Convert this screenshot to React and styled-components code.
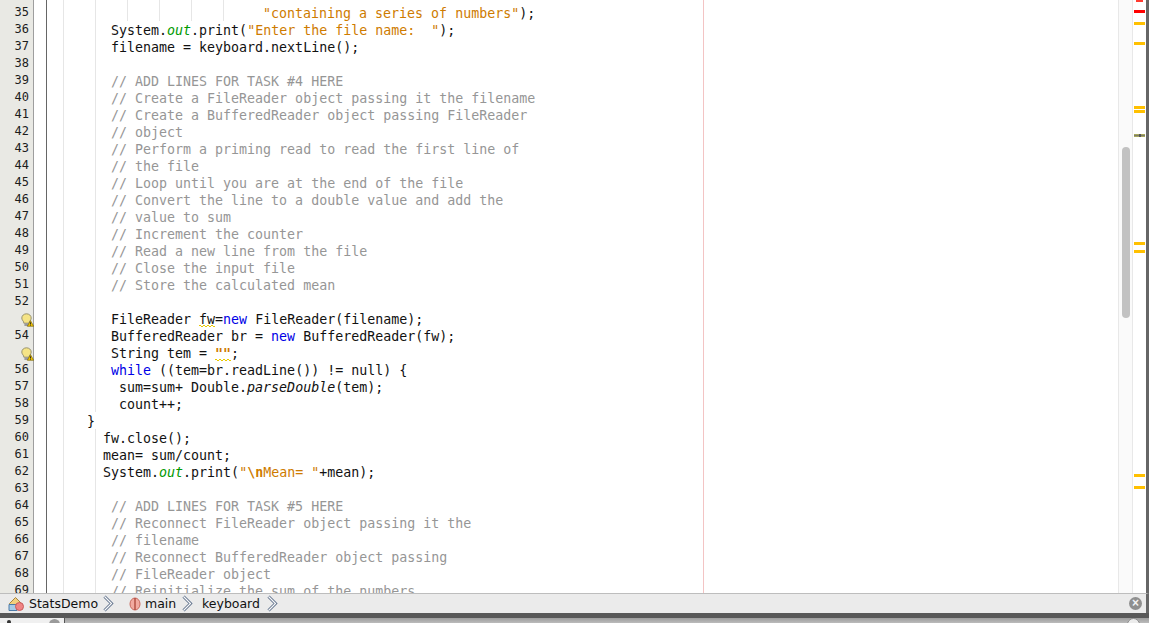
import React from "react";
import styled, { createGlobalStyle } from "styled-components";

const GlobalStyle = createGlobalStyle`
  html, body {
    margin: 0;
    padding: 0;
    background: #fff;
    overflow: hidden;
  }
`;

const STEP = 32;
const MONO = `"DejaVu Sans Mono", "Liberation Mono", monospace`;

const guideImage = ({ $guides }) =>
  Array.from({ length: $guides }, () => "linear-gradient(#e6e6e6, #e6e6e6)").join(", ") || "none";

const guidePos = ({ $guides }) =>
  Array.from({ length: $guides }, (_, i) => `${16 + i * STEP}px 0`).join(", ") || "0 0";

const Window = styled.div`
  width: 1149px;
  height: 623px;
  display: flex;
  flex-direction: column;
  overflow: hidden;
  background: #fff;
`;

const EditorRow = styled.div`
  height: 593px;
  display: flex;
  overflow: hidden;
`;

const Gutter = styled.div`
  width: 33px;
  flex: none;
  margin-top: -13px;
  background: #e9e9e4;
  border-right: 1px solid #9e9e9e;
  height: 606px;
`;

const GutterCell = styled.div`
  height: 17px;
  padding-right: 4px;
  text-align: right;
  font: 12px/17px ${MONO};
  color: #1c1c1c;
  position: relative;
`;

const Hint = styled.svg`
  position: absolute;
  right: -1px;
  top: 3px;
  width: 13px;
  height: 14px;
`;

const FoldStrip = styled.div`
  width: 12px;
  flex: none;
`;

const CodeArea = styled.div`
  width: 1072px;
  flex: none;
  margin-top: -13px;
  height: 606px;
  border-left: 1px solid #666;
  box-sizing: border-box;
  background-image: linear-gradient(#f3c4c4, #f3c4c4);
  background-repeat: no-repeat;
  background-size: 1px 100%;
  background-position: 656px 0;
`;

const CodeLine = styled.div`
  height: 17px;
  white-space: pre;
  font: 13.3px/19px ${MONO};
  color: #111;
  padding-left: ${({ $x }) => $x}px;
  background-image: ${guideImage};
  background-repeat: no-repeat;
  background-size: 1px 100%;
  background-position: ${guidePos};
`;

const Comment = styled.span`
  color: #969696;
`;

const Str = styled.span`
  color: #ce7b00;
  font-weight: ${({ $bold }) => ($bold ? "bold" : "normal")};
`;

const Keyword = styled.span`
  color: #0000e6;
`;

const Field = styled.span`
  color: #009900;
  font-style: italic;
`;

const Method = styled.span`
  font-style: italic;
`;

const Squiggle = styled.span`
  background-image:
    repeating-linear-gradient(90deg, #e8c800 0 2px, transparent 2px 4px),
    repeating-linear-gradient(90deg, transparent 0 2px, #e8c800 2px 4px);
  background-repeat: no-repeat;
  background-size: 100% 1px;
  background-position: 0 calc(100% - 1px), 0 100%;
`;

const Track = styled.div`
  width: 15px;
  flex: none;
  box-sizing: border-box;
  padding-left: 3px;
  background: #fafafa;
  border-left: 1px solid #e8e8e8;
  border-right: 1px solid #e8e8e8;
`;

const Thumb = styled.div`
  width: 8px;
  height: 171px;
  margin-top: 147px;
  background: #c2c2c2;
  border-radius: 4px;
`;

const StripeColumn = styled.div`
  width: 13px;
  flex: none;
  position: relative;
`;

const Stripe = styled.div`
  position: absolute;
  left: ${({ $inset }) => 1 + ($inset || 0)}px;
  right: ${({ $inset }) => 1 + ($inset || 0)}px;
  top: ${({ $y }) => $y}px;
  height: ${({ $h }) => $h || 3}px;
  background: ${({ $c }) => $c};
`;

const RightEdge = styled.div`
  width: 3px;
  flex: none;
  background: #666;
`;

const Breadcrumbs = styled.div`
  height: 20px;
  flex: none;
  display: flex;
  align-items: center;
  padding: 0 4px 0 8px;
  background: #ebebeb;
  border-top: 1px solid #bdbdbd;
  border-right: 3px solid #666;
  box-sizing: border-box;
  font: 12.5px "DejaVu Sans", "Liberation Sans", sans-serif;
  color: #111;
`;

const Crumb = styled.span`
  margin-left: ${({ $gap }) => $gap || 0}px;
  width: ${({ $w }) => $w}px;
  white-space: nowrap;
`;

const Spacer = styled.div`
  flex: 1;
`;

const CloseDot = styled.div`
  width: 13px;
  height: 13px;
  border-radius: 50%;
  background: #8f8f8f;
  color: #f4f4f4;
  display: flex;
  align-items: center;
  justify-content: center;
  font: bold 12px/13px "Liberation Sans", sans-serif;
`;

const DarkBar = styled.div`
  height: 5px;
  flex: none;
  background: #585858;
`;

const BottomStrip = styled.div`
  flex: 1;
  display: flex;
  background: linear-gradient(#9c9c9c, #bcbcbc);
  position: relative;
`;

const BottomTab = styled.div`
  width: 65px;
  flex: none;
  background: #f0f0f0;
  border-right: 1px solid #555;
  box-sizing: border-box;
  position: relative;
`;

const TabKnob = styled.div`
  position: absolute;
  left: ${({ $x }) => $x}px;
  top: ${({ $y }) => $y}px;
  width: ${({ $size }) => $size}px;
  height: ${({ $size }) => $size}px;
  border-radius: 50%;
  background: ${({ $c }) => $c};
`;

const CornerKnob = styled.div`
  position: absolute;
  right: 9px;
  top: 0;
  width: 13px;
  height: 13px;
  box-sizing: border-box;
  border-radius: 50%;
  border: 1px solid #8a8a8a;
  background: #ececec;
`;

const IconSvg = styled.svg`
  flex: none;
  margin-left: ${({ $gap }) => $gap || 0}px;
`;

const HintIcon = () => (
  <Hint viewBox="0 0 13 14">
    <path d="M5.5.8C2.8.8.8 2.7.8 5c0 1.8 1.2 2.7 1.8 3.9l.2 1.3h5.4l.2-1.3c.6-1.2 1.8-2.1 1.8-3.9C10.2 2.7 8.2.8 5.5.8z" fill="#f5e486" stroke="#8f8a6a" strokeWidth="0.9" />
    <rect x="3.4" y="10.2" width="4.2" height="2.8" fill="#9c9c9c" />
    <path d="M9.5 7.6l3.2 5.7H6.3z" fill="#f2c400" stroke="#6b5a00" strokeWidth="0.6" />
    <rect x="9.1" y="9.3" width="0.9" height="2" fill="#222" />
    <rect x="9.1" y="11.7" width="0.9" height="0.9" fill="#222" />
  </Hint>
);

const ProjectIcon = () => (
  <IconSvg width="16" height="16" viewBox="0 0 16 16">
    <path d="M1.5 7.5L7.5 1.5l5.5 5.5-4 6H2z" fill="#f2cf7e" stroke="#a5843f" />
    <path d="M1 8.5h8v6H1z" fill="#a6cbe8" stroke="#4d7ba8" />
    <circle cx="11.5" cy="10.5" r="4" fill="#f08484" stroke="#c85a5a" />
  </IconSvg>
);

const MethodIcon = () => (
  <IconSvg width="12" height="14" viewBox="0 0 12 14">
    <ellipse cx="6" cy="7" rx="5" ry="6" fill="#f2aaa0" stroke="#c9685c" />
    <rect x="5.3" y="1" width="1.4" height="12" fill="#b04a3e" />
  </IconSvg>
);

const Chevron = ({ gap }) => (
  <IconSvg $gap={gap} width="11" height="17" viewBox="0 0 11 17">
    <path d="M1.5 1.5l7 7-7 7" fill="none" stroke="#5d6f8a" strokeWidth="3" />
    <path d="M1.5 1.5l7 7-7 7" fill="none" stroke="#fafafa" strokeWidth="1.2" />
  </IconSvg>
);

const c = (t) => <Comment>{t}</Comment>;

// line number, x offset of text from code column, guide count, content
const LINES = [
  [34, 0, 6, null],
  [35, 216, 6, <Str>"containing a series of numbers"</Str>, ");"],
  [36, 64, 2, "System.", <Field>out</Field>, ".print(", <Str>"Enter the file name:  "</Str>, ");"],
  [37, 64, 2, "filename = keyboard.nextLine();"],
  [38, 0, 2, null],
  [39, 64, 2, c("// ADD LINES FOR TASK #4 HERE")],
  [40, 64, 2, c("// Create a FileReader object passing it the filename")],
  [41, 64, 2, c("// Create a BufferedReader object passing FileReader")],
  [42, 64, 2, c("// object")],
  [43, 64, 2, c("// Perform a priming read to read the first line of")],
  [44, 64, 2, c("// the file")],
  [45, 64, 2, c("// Loop until you are at the end of the file")],
  [46, 64, 2, c("// Convert the line to a double value and add the")],
  [47, 64, 2, c("// value to sum")],
  [48, 64, 2, c("// Increment the counter")],
  [49, 64, 2, c("// Read a new line from the file")],
  [50, 64, 2, c("// Close the input file")],
  [51, 64, 2, c("// Store the calculated mean")],
  [52, 0, 2, null],
  [53, 64, 2, "FileReader ", <Squiggle>fw</Squiggle>, "=", <Keyword>new</Keyword>, " FileReader(filename);"],
  [54, 64, 2, "BufferedReader br = ", <Keyword>new</Keyword>, " BufferedReader(fw);"],
  [55, 64, 2, "String tem = ", <Squiggle><Str $bold>""</Str></Squiggle>, ";"],
  [56, 64, 2, <Keyword>while</Keyword>, " ((tem=br.readLine()) != null) {"],
  [57, 72, 2, "sum=sum+ Double.", <Method>parseDouble</Method>, "(tem);"],
  [58, 72, 2, "count++;"],
  [59, 40, 1, "}"],
  [60, 56, 2, "fw.close();"],
  [61, 56, 2, "mean= sum/count;"],
  [62, 56, 2, "System.", <Field>out</Field>, ".print(", <Str>"</Str>, <Str $bold>\n</Str>, <Str>Mean= "</Str>, "+mean);"],
  [63, 0, 2, null],
  [64, 64, 2, c("// ADD LINES FOR TASK #5 HERE")],
  [65, 64, 2, c("// Reconnect FileReader object passing it the")],
  [66, 64, 2, c("// filename")],
  [67, 64, 2, c("// Reconnect BufferedReader object passing")],
  [68, 64, 2, c("// FileReader object")],
  [69, 64, 2, c("// Reinitialize the sum of the numbers")],
];

const ORANGE = "#ffc000";
const OLIVE = "linear-gradient(90deg, transparent 5px, #555 5px, #555 7px, transparent 7px), linear-gradient(#a8a85c 1px, #7d7d6a 1px, #7d7d6a 2px, #a8a85c 2px)";

const STRIPES = [
  { y: 0, c: "#ff3b30", h: 2, inset: 2 },
  { y: 10, c: "#ff0000" },
  { y: 22, c: ORANGE },
  { y: 42, c: ORANGE },
  { y: 106, c: ORANGE },
  { y: 110, c: ORANGE },
  { y: 134, c: OLIVE },
  { y: 242, c: ORANGE },
  { y: 250, c: ORANGE },
  { y: 474, c: ORANGE },
  { y: 486, c: ORANGE },
];

const App = () => (
  <Window>
    <GlobalStyle />
    <EditorRow>
      <Gutter>
        {LINES.map(([n]) => (
          <GutterCell key={n}>
            {n === 53 || n === 55 ? <HintIcon /> : n}
          </GutterCell>
        ))}
      </Gutter>
      <FoldStrip />
      <CodeArea>
        {LINES.map(([n, x, guides, ...parts]) => (
          <CodeLine key={n} $x={x} $guides={guides}>
            {parts.map((p, i) => (
              <React.Fragment key={i}>{p}</React.Fragment>
            ))}
          </CodeLine>
        ))}
      </CodeArea>
      <Track>
        <Thumb />
      </Track>
      <StripeColumn>
        {STRIPES.map((s) => (
          <Stripe key={s.y} $y={s.y} $c={s.c} $h={s.h} $inset={s.inset} />
        ))}
      </StripeColumn>
      <RightEdge />
    </EditorRow>
    <Breadcrumbs>
      <ProjectIcon />
      <Crumb $gap={5} $w={69}>StatsDemo</Crumb>
      <Chevron gap={5} />
      <Crumb $gap={0} $w={15} />
      <MethodIcon />
      <Crumb $gap={4} $w={32}>main</Crumb>
      <Chevron gap={5} />
      <Crumb $gap={9} $w={60}>keyboard</Crumb>
      <Chevron gap={5} />
      <Spacer />
      <CloseDot>×</CloseDot>
    </Breadcrumbs>
    <DarkBar />
    <BottomStrip>
      <BottomTab>
        <TabKnob $x={7} $y={2} $size={4} $c="#333" />
        <TabKnob $x={49} $y={1} $size={11} $c="#9a9a9a" />
      </BottomTab>
      <CornerKnob />
    </BottomStrip>
  </Window>
);

export default App;
